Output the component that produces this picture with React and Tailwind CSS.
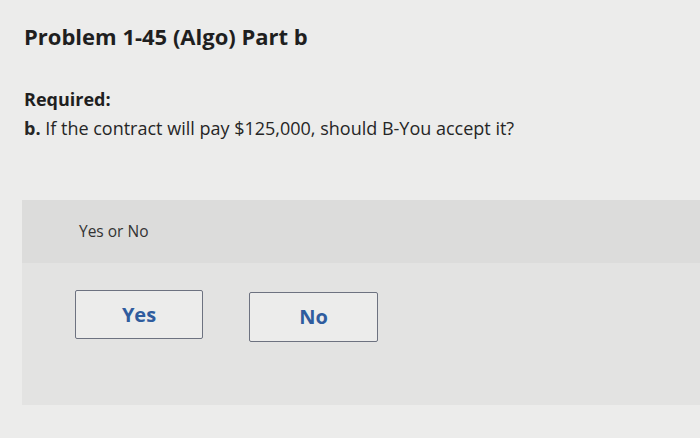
import React from 'react';

const App = () => {
  return (
    <div className="w-[700px] h-[438px] overflow-hidden bg-[#ececeb] text-[#1f1f1f] font-['Open_Sans',sans-serif]">
      {/* Heading */}
      <div className="pt-[21px] pl-[24px]">
        <h1 className="text-[22px] font-bold leading-[30px]">Problem 1-45 (Algo) Part b</h1>
      </div>

      <div className="pl-[24px] pt-[36px]">
        <p className="text-[18px] font-bold leading-[24px]">Required:</p>
        <p className="mt-[5px] text-[18px] leading-[24px] text-[#262626]">
          <span className="font-bold">b.</span> If the contract will pay $125,000, should B-You accept it?
        </p>
      </div>

      {/* Answer panel */}
      <div className="ml-[22px] mt-[60px] h-[205px] bg-[#e3e3e2] flex flex-col">
        <div className="h-[63px] bg-[#dcdcdb] pl-[57px] pt-[19px]">
          <span className="text-[15.5px] text-[#333]">Yes or No</span>
        </div>
        <div className="flex gap-[46px] pl-[53px] pt-[27px]">
          <button className="w-[128px] h-[49px] bg-[#ececeb] border border-[#6d7280] rounded-[2px] text-[20px] font-bold text-[#2f5c9e]">
            Yes
          </button>
          <button className="w-[129px] h-[50px] mt-[2px] bg-[#ececeb] border border-[#6d7280] rounded-[2px] text-[20px] font-bold text-[#2f5c9e]">
            No
          </button>
        </div>
      </div>
    </div>
  );
};

export default App;
